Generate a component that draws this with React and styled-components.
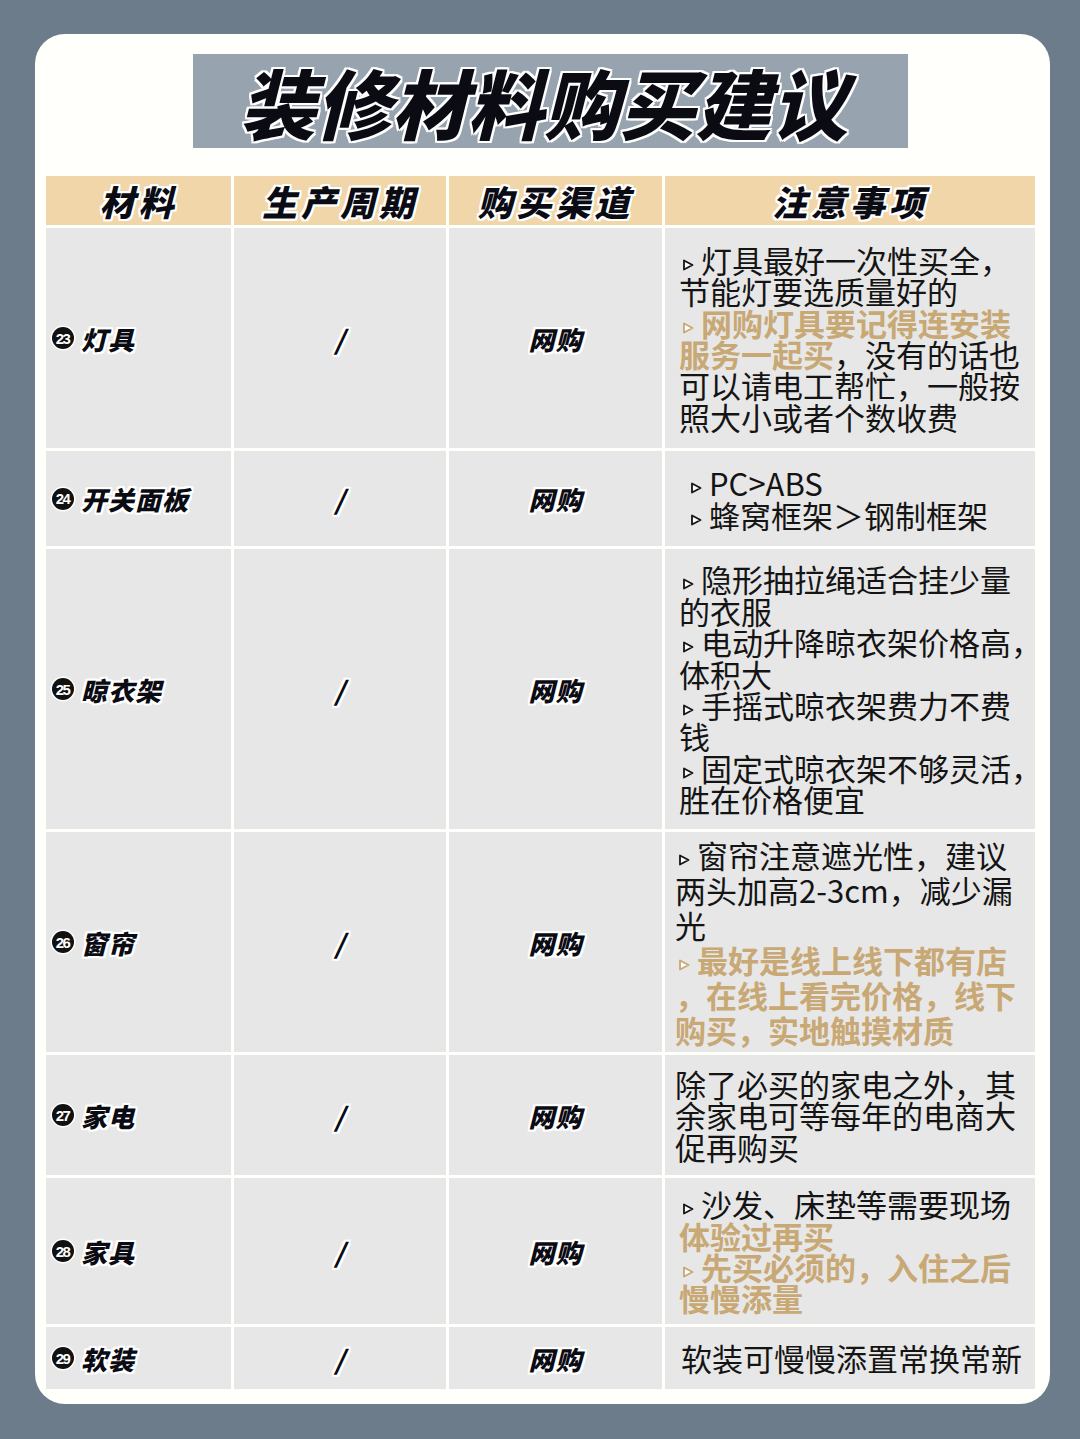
import styled, { createGlobalStyle } from "styled-components";

const GlobalStyle = createGlobalStyle`
  html, body {
    margin: 0;
    padding: 0;
    background: #6d7c8a;
  }
  body {
    font-family: "Noto Sans CJK SC", "Noto Sans", sans-serif;
  }
`;

const Page = styled.div`
  width: 1080px;
  height: 1439px;
  padding: 34px 30px 0 35px;
  box-sizing: border-box;
`;

const Card = styled.div`
  background: #fffffc;
  border-radius: 30px;
  height: 1370px;
  padding: 20px 15px 0 11px;
  box-sizing: border-box;
`;

const Banner = styled.div`
  width: 715px;
  height: 94px;
  margin: 0 0 28px 147px;
  background: #97a3ae;
  display: flex;
  align-items: center;
  justify-content: center;
`;

const outline = `
  text-shadow:
    2px 0 0 #fff, -2px 0 0 #fff, 0 2px 0 #fff, 0 -2px 0 #fff,
    2px 2px 0 #fff, -2px -2px 0 #fff, 2px -2px 0 #fff, -2px 2px 0 #fff;
`;

const Title = styled.h1`
  margin: 0 14px 0 0;
  font-family: "Noto Sans CJK SC", sans-serif;
  font-weight: 900;
  font-style: italic;
  font-size: 76px;
  line-height: 1;
  color: #0b0b14;
  ${outline}
`;

const Table = styled.div`
  display: grid;
  grid-template-columns: 185px 212px 213px 370px;
  gap: 3px;
`;

const HeadCell = styled.div`
  height: 49px;
  background: #f0d6a9;
  display: flex;
  align-items: center;
  justify-content: center;
  font-weight: 900;
  font-style: italic;
  font-size: 35px;
  letter-spacing: 4px;
  color: #0b0b14;
  ${outline}
`;

const Cell = styled.div`
  height: ${({ $h }) => $h}px;
  min-width: 0;
  background: #e7e7e7;
  display: flex;
  align-items: center;
  justify-content: center;
  box-sizing: border-box;
`;

const NameCell = styled(Cell)`
  justify-content: flex-start;
  padding-left: 6px;
  gap: 7px;
`;

const Badge = styled.span`
  width: 22px;
  height: 22px;
  border-radius: 50%;
  background: #111;
  color: #fff;
  font-family: "Liberation Sans", sans-serif;
  font-weight: 700;
  font-size: 15px;
  letter-spacing: -1.5px;
  text-indent: -1px;
  display: inline-flex;
  align-items: center;
  justify-content: center;
  box-shadow: 0 0 0 1.5px #fff;
`;

const Bold = styled.span`
  font-weight: 900;
  font-style: italic;
  font-size: 26px;
  letter-spacing: 1px;
  color: #0b0b14;
  ${outline}
`;

const NoteCell = styled(Cell)`
  justify-content: flex-start;
  padding-left: ${({ $pad }) => $pad || 14}px;
`;

const Notes = styled.div`
  font-size: 31px;
  line-height: ${({ $lh }) => $lh || 31.4}px;
  color: #141414;
  letter-spacing: ${({ $ls }) => $ls || 0}px;
`;

const Line = styled.div`
  white-space: nowrap;
`;

const Gold = styled.span`
  color: #c8a874;
  font-weight: 700;
`;

const Tri = ({ gold }) => (
  <svg
    width="20"
    height="12"
    viewBox="0 0 20 12"
    style={{ marginRight: 2, verticalAlign: "2px" }}
  >
    <path
      d="M5 1.5 L13.5 6 L5 10.5 Z"
      fill="#fff"
      stroke={gold ? "#c8a874" : "#141414"}
      strokeWidth="1.8"
      strokeLinejoin="round"
    />
  </svg>
);

const rows = [
  {
    n: "23",
    name: "灯具",
    h: 220,
    lines: [
      [{ tri: true }, { t: "灯具最好一次性买全，" }],
      [{ t: "节能灯要选质量好的" }],
      [{ tri: true, gold: true }, { t: "网购灯具要记得连安装", gold: true }],
      [{ t: "服务一起买", gold: true }, { t: "，没有的话也" }],
      [{ t: "可以请电工帮忙，一般按" }],
      [{ t: "照大小或者个数收费" }],
    ],
  },
  {
    n: "24",
    name: "开关面板",
    h: 95,
    pad: 22,
    lines: [
      [{ tri: true }, { t: "PC>ABS" }],
      [{ tri: true }, { t: "蜂窝框架＞钢制框架" }],
    ],
  },
  {
    n: "25",
    name: "晾衣架",
    h: 280,
    lines: [
      [{ tri: true }, { t: "隐形抽拉绳适合挂少量" }],
      [{ t: "的衣服" }],
      [{ tri: true }, { t: "电动升降晾衣架价格高，" }],
      [{ t: "体积大" }],
      [{ tri: true }, { t: "手摇式晾衣架费力不费" }],
      [{ t: "钱" }],
      [{ tri: true }, { t: "固定式晾衣架不够灵活，" }],
      [{ t: "胜在价格便宜" }],
    ],
  },
  {
    n: "26",
    name: "窗帘",
    h: 220,
    pad: 10,
    lh: 35,
    lines: [
      [{ tri: true }, { t: "窗帘注意遮光性，建议" }],
      [{ t: "两头加高2-3cm，减少漏" }],
      [{ t: "光" }],
      [{ tri: true, gold: true }, { t: "最好是线上线下都有店", gold: true }],
      [{ t: "，在线上看完价格，线下", gold: true }],
      [{ t: "购买，实地触摸材质", gold: true }],
    ],
  },
  {
    n: "27",
    name: "家电",
    h: 120,
    pad: 10,
    lines: [
      [{ t: "除了必买的家电之外，其" }],
      [{ t: "余家电可等每年的电商大" }],
      [{ t: "促再购买" }],
    ],
  },
  {
    n: "28",
    name: "家具",
    h: 146,
    lines: [
      [{ tri: true }, { t: "沙发、床垫等需要现场" }],
      [{ t: "体验过再买", gold: true }],
      [{ tri: true, gold: true }, { t: "先买必须的，入住之后", gold: true }],
      [{ t: "慢慢添量", gold: true }],
    ],
  },
  {
    n: "29",
    name: "软装",
    h: 62,
    pad: 16,
    lines: [[{ t: "软装可慢慢添置常换常新" }]],
  },
];

const Row = ({ row }) => (
  <>
    <NameCell $h={row.h}>
      <Badge>{row.n}</Badge>
      <Bold>{row.name}</Bold>
    </NameCell>
    <Cell $h={row.h}>
      <Bold>/</Bold>
    </Cell>
    <Cell $h={row.h}>
      <Bold>网购</Bold>
    </Cell>
    <NoteCell $h={row.h} $pad={row.pad}>
      <Notes $lh={row.lh} $ls={row.ls}>
        {row.lines.map((parts, i) => (
          <Line key={i}>
            {parts.map((p, j) =>
              p.tri ? (
                <Tri key={j} gold={p.gold} />
              ) : p.gold ? (
                <Gold key={j}>{p.t}</Gold>
              ) : (
                <span key={j}>{p.t}</span>
              )
            )}
          </Line>
        ))}
      </Notes>
    </NoteCell>
  </>
);

export default function App() {
  return (
    <>
      <GlobalStyle />
      <Page>
        <Card>
          <Banner>
            <Title>装修材料购买建议</Title>
          </Banner>
          <Table>
            <HeadCell>材料</HeadCell>
            <HeadCell>生产周期</HeadCell>
            <HeadCell>购买渠道</HeadCell>
            <HeadCell>注意事项</HeadCell>
            {rows.map((r) => (
              <Row key={r.n} row={r} />
            ))}
          </Table>
        </Card>
      </Page>
    </>
  );
}
